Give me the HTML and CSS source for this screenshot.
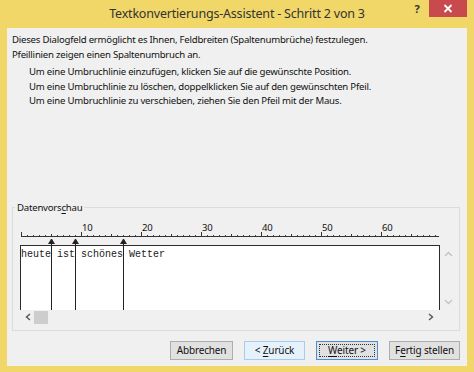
FILE: index.html
```html
<!DOCTYPE html>
<html lang="de">
<head>
    <meta charset="UTF-8">
    <title>Textkonvertierungs-Assistent - Schritt 2 von 3</title>
    <link rel="stylesheet" href="styles.css">
</head>
<body>

<div class="window">
    <!-- Titelleiste -->
    <div class="titlebar">
        <span class="spacer"></span>
        <span class="title">Textkonvertierungs-Assistent - Schritt 2 von 3</span>
        <div class="controls">
            <span class="help">?</span>
            <span class="close">
                <svg width="10" height="9" viewBox="0 0 10 9"><path d="M1.5 1 L8.5 8 M8.5 1 L1.5 8" stroke="#fff" stroke-width="1.8"/></svg>
            </span>
        </div>
    </div>

    <div class="client">
        <p class="intro">Dieses Dialogfeld ermöglicht es Ihnen, Feldbreiten (Spaltenumbrüche) festzulegen.<br>Pfeillinien zeigen einen Spaltenumbruch an.</p>
        <p class="hints">Um eine Umbruchlinie einzufügen, klicken Sie auf die gewünschte Position.<br>Um eine Umbruchlinie zu löschen, doppelklicken Sie auf den gewünschten Pfeil.<br>Um eine Umbruchlinie zu verschieben, ziehen Sie den Pfeil mit der Maus.</p>

        <fieldset class="preview-group">
            <legend>Datenvors<u>c</u>hau</legend>
            <div class="preview">
                <div class="ruler">
                    <div class="ruler-labels">
                        <span>10</span><span>20</span><span>30</span><span>40</span><span>50</span><span>60</span>
                    </div>
                    <div class="ruler-ticks"></div>
                </div>
                <div class="grid">
                    <div class="data">heute ist schönes Wetter</div>
                    <div class="vscroll">
                        <svg width="9" height="6" viewBox="0 0 9 6"><path d="M1 5 L4.5 1.5 L8 5" fill="none" stroke="#c2c2c2" stroke-width="1.3"/></svg>
                        <svg width="9" height="6" viewBox="0 0 9 6"><path d="M1 1 L4.5 4.5 L8 1" fill="none" stroke="#c2c2c2" stroke-width="1.3"/></svg>
                    </div>
                    <div class="hscroll">
                        <svg width="6" height="8" viewBox="0 0 6 8"><path d="M5 1 L1.5 4 L5 7" fill="none" stroke="#555" stroke-width="1.4"/></svg>
                        <span class="thumb"></span>
                        <span class="fill"></span>
                        <svg width="6" height="8" viewBox="0 0 6 8"><path d="M1 1 L4.5 4 L1 7" fill="none" stroke="#555" stroke-width="1.4"/></svg>
                    </div>
                </div>
                <!-- Spaltenumbrüche nach Zeichen 5, 9 und 17 -->
                <div class="break" style="left: 31px"></div>
                <div class="break" style="left: 55px"></div>
                <div class="break" style="left: 103px"></div>
            </div>
        </fieldset>

        <div class="buttons">
            <button class="btn btn-cancel">Abbrechen</button>
            <button class="btn btn-back">&lt; <u>Z</u>urück</button>
            <button class="btn btn-next"><span class="focus"><u>W</u>eiter &gt;</span></button>
            <button class="btn btn-finish">F<u>e</u>rtig stellen</button>
        </div>
    </div>
</div>

</body>
</html>
```

FILE: styles.css
```css
* {
    margin: 0;
    padding: 0;
    box-sizing: border-box;
}

body {
    width: 474px;
    height: 372px;
    background: #f1d767;
    font-family: 'Noto Sans', 'Liberation Sans', sans-serif;
    color: #111;
    overflow: hidden;
}

.window {
    height: 372px;
    display: flex;
    flex-direction: column;
}

.titlebar {
    height: 28px;
    display: grid;
    grid-template-columns: 69px 1fr 69px;
}

.title {
    text-align: center;
    font-size: 12.5px;
    letter-spacing: -0.2px;
    line-height: 27px;
    color: #333;
}

.controls {
    display: flex;
    align-items: flex-start;
    justify-content: flex-end;
    padding-right: 7px;
}

.help {
    font-size: 11px;
    font-weight: bold;
    color: #333;
    width: 24px;
    line-height: 18px;
    text-align: center;
}

.close {
    width: 38px;
    height: 17px;
    background: #c84a4d;
    display: flex;
    align-items: center;
    justify-content: center;
}

.client {
    flex: 1;
    margin: 0 7px 6px 7px;
    background: #f0f0f0;
    padding: 5px 7px 0 5px;
    font-size: 9.6px;
    letter-spacing: -0.22px;
    line-height: 14.5px;
}

.hints {
    margin-top: 3px;
    padding-left: 17px;
}

.preview-group {
    margin-top: 92px;
    border: 1px solid #dcdcdc;
    padding: 0 0 5px 0;
}

.preview-group legend {
    margin-left: 2px;
    padding: 0 2px;
    line-height: 14px;
}

.preview-group u,
.btn u {
    text-underline-offset: 2px;
}

.preview {
    position: relative;
    margin-left: 7px;
}

.ruler {
    height: 30px;
    padding-left: 1px;
    display: flex;
    flex-direction: column;
    justify-content: flex-end;
    padding-bottom: 8px;
}

.ruler-labels {
    display: flex;
    padding-left: 61px;
    margin-bottom: -3px;
    font-size: 9.5px;
    letter-spacing: -0.3px;
    line-height: 12px;
}

.ruler-labels span {
    width: 60px;
}

.ruler-ticks {
    width: 418px;
    height: 6px;
    border-bottom: 1px solid #333;
    background:
        repeating-linear-gradient(to right, #333 0 1px, transparent 1px 60px) 0 1px / 100% 5px no-repeat,
        repeating-linear-gradient(to right, #333 0 1px, transparent 1px 30px) 0 3px / 100% 3px no-repeat,
        repeating-linear-gradient(to right, #444 0 1px, transparent 1px 6px) 0 4px / 100% 2px no-repeat;
}

.grid {
    display: grid;
    grid-template-columns: 420px 17px;
    grid-template-rows: 65px 15px;
}

.data {
    background: #fff;
    border: 1px solid #2b2b2b;
    border-bottom: none;
    padding-top: 3px;
    font-family: 'Liberation Mono', monospace;
    font-size: 10px;
    letter-spacing: 0;
    line-height: 12px;
    color: #1a1a1a;
    white-space: pre;
}

.vscroll {
    display: flex;
    flex-direction: column;
    justify-content: space-between;
    align-items: center;
    padding: 6px 0 5px 0;
}

.hscroll {
    display: flex;
    align-items: center;
    padding: 0 6px 0 5px;
}

.hscroll .thumb {
    width: 14px;
    height: 13px;
    margin-left: 3px;
    background: #cdcdcd;
}

.hscroll .fill {
    flex: 1;
}

.break {
    position: absolute;
    top: 24px;
    width: 1px;
    height: 71px;
    background: #222;
}

.break::before {
    content: '';
    position: absolute;
    left: -3px;
    top: 0;
    width: 1px;
    border-left: 3px solid transparent;
    border-right: 3px solid transparent;
    border-bottom: 5px solid #222;
}

.buttons {
    display: flex;
    justify-content: flex-end;
    gap: 11px;
    margin-top: 10px;
}

.btn {
    height: 19px;
    font-family: inherit;
    font-size: 10px;
    letter-spacing: -0.15px;
    color: #111;
    background: #e1e1e1;
    border: 1px solid #adadad;
    text-align: center;
}

.btn-cancel {
    width: 63px;
}

.btn-back {
    width: 61px;
    background: #e5f1fb;
    border-color: #a6cbee;
}

.btn-next {
    width: 62px;
    border-color: #4b8fd6;
    padding: 2px;
}

.btn-next .focus {
    display: block;
    height: 100%;
    border: 1px dotted #333;
    line-height: 11px;
}

.btn-finish {
    width: 71px;
}
```
